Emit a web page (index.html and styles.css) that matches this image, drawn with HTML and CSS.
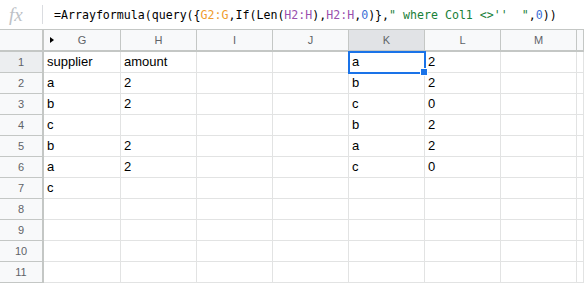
FILE: index.html
```html
<!DOCTYPE html>
<html lang="en">
<head>
    <meta charset="UTF-8">
    <title>Sheet</title>
    <link rel="stylesheet" href="styles.css">
</head>
<body>
    <div class="formula-bar">
        <div class="fx">fx</div>
        <div class="formula">=Arrayformula(query({<span class="ref-g">G2:G</span>,If(Len(<span class="ref-h">H2:H</span>),<span class="ref-h">H2:H</span>,<span class="num">0</span>)},<span class="str">" where Col1 &lt;&gt;''  "</span>,<span class="num">0</span>))</div>
    </div>
    <div class="grid">
        <div class="corner"></div>
        <div class="col-head"><span class="hidden-mark"></span>G</div>
        <div class="col-head">H</div>
        <div class="col-head">I</div>
        <div class="col-head">J</div>
        <div class="col-head active">K</div>
        <div class="col-head">L</div>
        <div class="col-head">M</div>
        <div class="col-head"></div>

        <div class="row-head active">1</div>
        <div class="cell">supplier</div><div class="cell">amount</div><div class="cell"></div><div class="cell"></div>
        <div class="cell selected">a<span class="handle"></span></div><div class="cell">2</div><div class="cell"></div><div class="cell"></div>

        <div class="row-head">2</div>
        <div class="cell">a</div><div class="cell">2</div><div class="cell"></div><div class="cell"></div>
        <div class="cell">b</div><div class="cell">2</div><div class="cell"></div><div class="cell"></div>

        <div class="row-head">3</div>
        <div class="cell">b</div><div class="cell">2</div><div class="cell"></div><div class="cell"></div>
        <div class="cell">c</div><div class="cell">0</div><div class="cell"></div><div class="cell"></div>

        <div class="row-head">4</div>
        <div class="cell">c</div><div class="cell"></div><div class="cell"></div><div class="cell"></div>
        <div class="cell">b</div><div class="cell">2</div><div class="cell"></div><div class="cell"></div>

        <div class="row-head">5</div>
        <div class="cell">b</div><div class="cell">2</div><div class="cell"></div><div class="cell"></div>
        <div class="cell">a</div><div class="cell">2</div><div class="cell"></div><div class="cell"></div>

        <div class="row-head">6</div>
        <div class="cell">a</div><div class="cell">2</div><div class="cell"></div><div class="cell"></div>
        <div class="cell">c</div><div class="cell">0</div><div class="cell"></div><div class="cell"></div>

        <div class="row-head">7</div>
        <div class="cell">c</div><div class="cell"></div><div class="cell"></div><div class="cell"></div>
        <div class="cell"></div><div class="cell"></div><div class="cell"></div><div class="cell"></div>

        <div class="row-head">8</div>
        <div class="cell"></div><div class="cell"></div><div class="cell"></div><div class="cell"></div>
        <div class="cell"></div><div class="cell"></div><div class="cell"></div><div class="cell"></div>

        <div class="row-head">9</div>
        <div class="cell"></div><div class="cell"></div><div class="cell"></div><div class="cell"></div>
        <div class="cell"></div><div class="cell"></div><div class="cell"></div><div class="cell"></div>

        <div class="row-head">10</div>
        <div class="cell"></div><div class="cell"></div><div class="cell"></div><div class="cell"></div>
        <div class="cell"></div><div class="cell"></div><div class="cell"></div><div class="cell"></div>

        <div class="row-head">11</div>
        <div class="cell"></div><div class="cell"></div><div class="cell"></div><div class="cell"></div>
        <div class="cell"></div><div class="cell"></div><div class="cell"></div><div class="cell"></div>
    </div>
</body>
</html>
```

FILE: styles.css
```css
body {
    margin: 0;
    padding: 0;
    background-color: #fff;
    font-family: Arial, "Liberation Sans", sans-serif;
    overflow: hidden;
}
.formula-bar {
    display: flex;
    align-items: center;
    height: 29px;
    border-bottom: 1px solid #c4c7c5;
}
.fx {
    width: 43px;
    box-sizing: border-box;
    padding-left: 9px;
    font-family: "Liberation Serif", serif;
    font-style: italic;
    font-size: 19px;
    color: #bdc1c6;
    border-right: 1px solid #dadce0;
    line-height: 19px;
    height: 19px;
}
.formula {
    padding-left: 11px;
    font-family: "DejaVu Sans Mono", monospace;
    font-size: 11.6px;
    color: #000;
    white-space: pre;
}
.ref-g {
    color: #f09c2e;
}
.ref-h {
    color: #9a4fae;
}
.num {
    color: #3c6fd6;
}
.str {
    color: #188038;
}
.grid {
    display: grid;
    grid-template-columns: 44px 77px repeat(6, 76px) 1fr;
    grid-template-rows: 22px;
    grid-auto-rows: 21px;
}
.corner {
    background-color: #f8f9fa;
    border-right: 2px solid #c4c7c5;
    border-bottom: 2px solid #c4c7c5;
    box-sizing: border-box;
}
.col-head {
    position: relative;
    background-color: #f8f9fa;
    border-right: 1px solid #c4c7c5;
    border-bottom: 2px solid #c4c7c5;
    box-sizing: border-box;
    font-size: 11px;
    color: #5f6368;
    text-align: center;
    line-height: 20px;
}
.col-head.active {
    background-color: #e1e3e6;
}
.hidden-mark {
    position: absolute;
    left: 6px;
    top: 7px;
    width: 0;
    height: 0;
    border-top: 3.5px solid transparent;
    border-bottom: 3.5px solid transparent;
    border-left: 4px solid #000;
}
.row-head {
    background-color: #f8f9fa;
    border-right: 2px solid #c4c7c5;
    border-bottom: 1px solid #c4c7c5;
    box-sizing: border-box;
    font-size: 11px;
    color: #5f6368;
    text-align: center;
    line-height: 20px;
}
.row-head.active {
    background-color: #eceef0;
}
.cell {
    position: relative;
    border-right: 1px solid #e2e3e3;
    border-bottom: 1px solid #e2e3e3;
    box-sizing: border-box;
    font-size: 13px;
    color: #000;
    padding-left: 3px;
    line-height: 20px;
}
.cell.selected {
    outline: 2px solid #1a73e8;
    outline-offset: -1px;
    z-index: 1;
}
.handle {
    position: absolute;
    right: -4px;
    bottom: -4px;
    width: 6px;
    height: 6px;
    background-color: #1a73e8;
    border: 1px solid #fff;
}
```
